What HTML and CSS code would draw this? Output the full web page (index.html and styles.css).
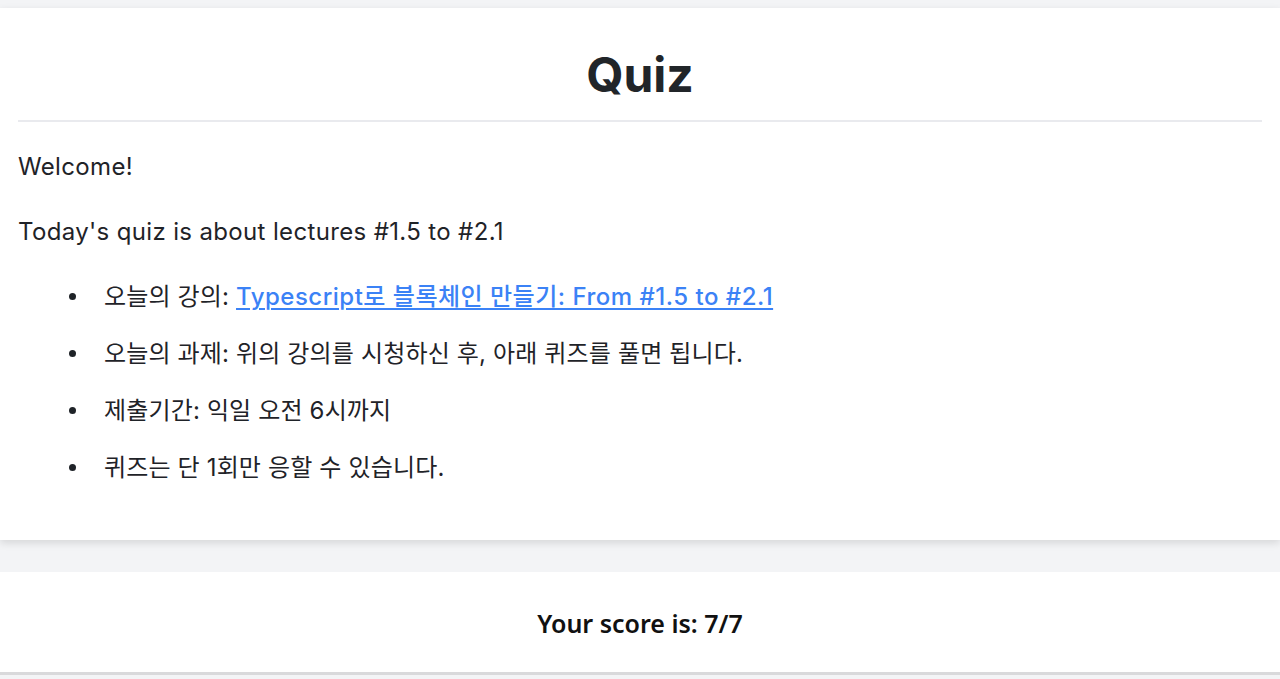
FILE: index.html
```html
<!DOCTYPE html>
<html lang="ko">
<head>
<meta charset="utf-8">
<title>Quiz</title>
<link rel="stylesheet" href="styles.css">
</head>
<body>
<main class="page">
  <section class="card intro">
    <h1 class="title">Quiz</h1>
    <hr class="rule">
    <p class="text">Welcome!</p>
    <p class="text">Today's quiz is about lectures #1.5 to #2.1</p>
    <ul class="list">
      <li class="item">오늘의 강의: <a class="link" href="#">Typescript로 블록체인 만들기: From #1.5 to #2.1</a></li>
      <li class="item">오늘의 과제: 위의 강의를 시청하신 후, 아래 퀴즈를 풀면 됩니다.</li>
      <li class="item">제출기간: 익일 오전 6시까지</li>
      <li class="item">퀴즈는 단 1회만 응할 수 있습니다.</li>
    </ul>
  </section>
  <section class="card score">
    <p class="score-text">Your score is: 7/7</p>
  </section>
</main>
</body>
</html>
```

FILE: styles.css
```css
html, body {
  margin: 0;
  padding: 0;
}
body {
  background: #f3f4f6;
  font-family: Inter, "Noto Sans CJK KR", sans-serif;
  color: #1f2328;
}
.page {
  padding-top: 8px;
  display: flex;
  flex-direction: column;
  gap: 32px;
}
.card {
  background: #ffffff;
}
.intro {
  padding: 38px 18px 54px;
  box-shadow: 0 3px 8px rgba(0, 0, 0, 0.12);
}
.title {
  margin: 0 0 16px;
  font-size: 48px;
  line-height: 58px;
  font-weight: 700;
  text-align: center;
  color: #212529;
}
.rule {
  margin: 0;
  border: 0;
  height: 2px;
  background: #e9eaee;
}
.text {
  margin: 27px 0 0;
  font-size: 24px;
  line-height: 36px;
  letter-spacing: 0.35px;
}
.text + .text {
  margin-top: 29px;
}
.list {
  margin: 29px 0 0;
  padding-left: 51px;
  list-style: none;
  font-size: 24px;
  line-height: 36px;
  letter-spacing: 0.15px;
}
.item::before {
  content: "";
  display: inline-block;
  width: 7px;
  height: 7px;
  border-radius: 50%;
  background: #1f2328;
  margin-right: 28px;
  vertical-align: middle;
  position: relative;
  top: -2px;
}
.item + .item {
  margin-top: 21px;
}
.link {
  color: #3b82f6;
  font-weight: 500;
  letter-spacing: 0.5px;
  text-decoration: underline;
  text-underline-offset: 3px;
  text-decoration-thickness: 2px;
}
.score {
  padding: 33px 0 31px;
  border-bottom: 3px solid #d9d9db;
}
.score-text {
  margin: 0;
  font-family: "Noto Sans", "Open Sans", sans-serif;
  font-weight: 600;
  font-size: 25px;
  line-height: 36px;
  text-align: center;
  color: #111111;
}
```
